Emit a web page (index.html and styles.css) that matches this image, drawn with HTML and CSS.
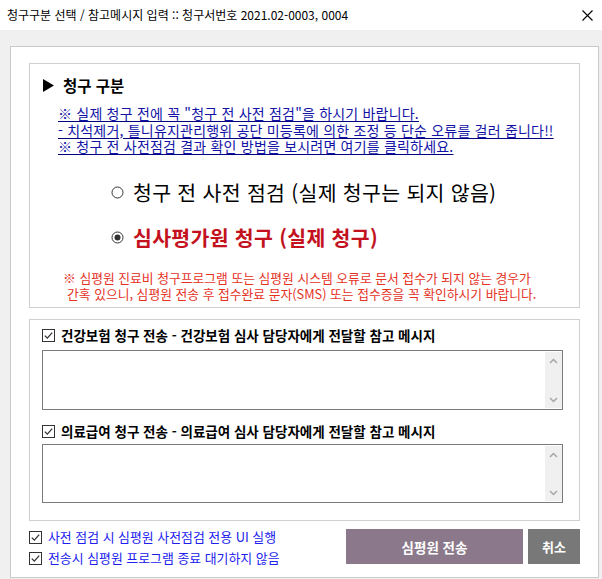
FILE: index.html
```html
<!DOCTYPE html>
<html lang="ko">
<head>
    <meta charset="UTF-8">
    <meta name="viewport" content="width=device-width, initial-scale=1.0">
    <title>청구구분 선택 / 참고메시지 입력</title>
    <link rel="stylesheet" href="styles.css">
</head>
<body>

    <!-- Window title bar -->
    <div class="titlebar">
        <span class="title">청구구분 선택 / 참고메시지 입력 :: 청구서번호 2021.02-0003, 0004</span>
        <svg class="close-btn" width="11" height="11" viewBox="0 0 11 11">
            <path d="M0.5 0.5 L10.5 10.5 M10.5 0.5 L0.5 10.5" stroke="#000" stroke-width="1.1" fill="none"/>
        </svg>
    </div>

    <div class="dialog">

        <!-- 청구 구분 -->
        <div class="panel claim-panel">
            <h2 class="panel-title">
                <svg width="11" height="13" viewBox="0 0 11 13"><polygon points="0,0 11,6.5 0,13" fill="#000"/></svg>
                청구 구분
            </h2>

            <div class="notice-links">
                <a href="#">※ 실제 청구 전에 꼭 "청구 전 사전 점검"을 하시기 바랍니다.</a>
                <a href="#">- 치석제거, 틀니유지관리행위 공단 미등록에 의한 조정 등 단순 오류를 걸러 줍니다!!</a>
                <a href="#">※ 청구 전 사전점검 결과 확인 방법을 보시려면 여기를 클릭하세요.</a>
            </div>

            <div class="radio-row">
                <svg width="13" height="13" viewBox="0 0 13 13"><circle cx="6.5" cy="6.5" r="5.5" fill="#fff" stroke="#333" stroke-width="1"/></svg>
                <span>청구 전 사전 점검 (실제 청구는 되지 않음)</span>
            </div>
            <div class="radio-row checked">
                <svg width="13" height="13" viewBox="0 0 13 13"><circle cx="6.5" cy="6.5" r="5.5" fill="#fff" stroke="#333" stroke-width="1"/><circle cx="6.5" cy="6.5" r="3" fill="#333"/></svg>
                <span>심사평가원 청구 (실제 청구)</span>
            </div>

            <p class="warning">
                <span>※ 심평원 진료비 청구프로그램 또는 심평원 시스템 오류로 문서 접수가 되지 않는 경우가</span>
                <span class="second">간혹 있으니, 심평원 전송 후 접수완료 문자(SMS) 또는 접수증을 꼭 확인하시기 바랍니다.</span>
            </p>
        </div>

        <!-- 참고 메시지 -->
        <div class="panel message-panel">
            <div class="check-label">
                <svg width="13" height="13" viewBox="0 0 13 13"><rect x="0.5" y="0.5" width="12" height="12" fill="#fff" stroke="#333"/><path d="M2.8 6.6 L5.3 9.1 L10.2 3.6" stroke="#333" stroke-width="1.3" fill="none"/></svg>
                건강보험 청구 전송 - 건강보험 심사 담당자에게 전달할 참고 메시지
            </div>
            <div class="memo">
                <div class="scrollbar">
                    <span class="arrow"><svg width="9" height="6" viewBox="0 0 9 6"><path d="M1 5 L4.5 1.5 L8 5" stroke="#a6a6a6" stroke-width="1.5" fill="none"/></svg></span>
                    <span class="arrow"><svg width="9" height="6" viewBox="0 0 9 6"><path d="M1 1 L4.5 4.5 L8 1" stroke="#a6a6a6" stroke-width="1.5" fill="none"/></svg></span>
                </div>
            </div>

            <div class="check-label second">
                <svg width="13" height="13" viewBox="0 0 13 13"><rect x="0.5" y="0.5" width="12" height="12" fill="#fff" stroke="#333"/><path d="M2.8 6.6 L5.3 9.1 L10.2 3.6" stroke="#333" stroke-width="1.3" fill="none"/></svg>
                의료급여 청구 전송 - 의료급여 심사 담당자에게 전달할 참고 메시지
            </div>
            <div class="memo short">
                <div class="scrollbar">
                    <span class="arrow"><svg width="9" height="6" viewBox="0 0 9 6"><path d="M1 5 L4.5 1.5 L8 5" stroke="#a6a6a6" stroke-width="1.5" fill="none"/></svg></span>
                    <span class="arrow"><svg width="9" height="6" viewBox="0 0 9 6"><path d="M1 1 L4.5 4.5 L8 1" stroke="#a6a6a6" stroke-width="1.5" fill="none"/></svg></span>
                </div>
            </div>
        </div>

        <!-- Options and buttons -->
        <div class="footer-row">
            <div class="options">
                <div class="option">
                    <svg width="13" height="13" viewBox="0 0 13 13"><rect x="0.5" y="0.5" width="12" height="12" fill="#fff" stroke="#333"/><path d="M2.8 6.6 L5.3 9.1 L10.2 3.6" stroke="#333" stroke-width="1.3" fill="none"/></svg>
                    사전 점검 시 심평원 사전점검 전용 UI 실행
                </div>
                <div class="option">
                    <svg width="13" height="13" viewBox="0 0 13 13"><rect x="0.5" y="0.5" width="12" height="12" fill="#fff" stroke="#333"/><path d="M2.8 6.6 L5.3 9.1 L10.2 3.6" stroke="#333" stroke-width="1.3" fill="none"/></svg>
                    전송시 심평원 프로그램 종료 대기하지 않음
                </div>
            </div>
            <div class="actions">
                <button class="send-btn">심평원 전송</button>
                <button class="cancel-btn">취소</button>
            </div>
        </div>
    </div>

</body>
</html>
```

FILE: styles.css
```css
body {
    font-family: "Noto Sans CJK KR", "Noto Sans", sans-serif;
    background-color: #f0f0f0;
    margin: 0;
    padding: 0;
    color: #000;
}
/* Title bar */
.titlebar {
    height: 30px;
    background-color: #fff;
    display: flex;
    align-items: center;
    padding-left: 7px;
}
.title {
    font-size: 12px;
    line-height: 16px;
}
.close-btn {
    margin-left: auto;
    margin-right: 9px;
}
/* Dialog body */
.dialog {
    margin: 16px 3px 0 10px;
    border: 1px solid #cacaca;
    background-color: #fff;
    padding: 16px 18px 9px 18px;
}
.panel {
    border: 1px solid #cfcfcf;
}
.claim-panel {
    padding: 0 0 5px 13px;
}
.panel-title {
    margin: 11px 0 0 0;
    font-size: 15.5px;
    line-height: 20px;
    font-weight: bold;
    display: flex;
    align-items: center;
    gap: 9px;
}
.notice-links {
    margin: 10px 0 0 15px;
}
.notice-links a {
    display: block;
    width: fit-content;
    font-size: 14px;
    line-height: 16.5px;
    letter-spacing: 0.2px;
    color: #1212a6;
    text-decoration: underline;
    text-decoration-color: #000080;
    text-underline-offset: 2px;
}
.radio-row {
    margin: 24.5px 0 0 68px;
    height: 26px;
    display: flex;
    align-items: center;
    gap: 9px;
    font-size: 20.5px;
    line-height: 26px;
    letter-spacing: 0.3px;
}
.radio-row.checked {
    margin-top: 19px;
    font-weight: bold;
    color: #c3121e;
}
.warning {
    margin: 20px 0 0 20px;
    font-size: 12.8px;
    line-height: 16px;
    color: #e5321f;
}
.warning span {
    display: block;
}
.warning .second {
    padding-left: 4px;
}
/* Message panel */
.message-panel {
    margin-top: 11px;
    padding: 5px 16px 17px 12px;
}
.check-label {
    display: flex;
    align-items: center;
    gap: 6px;
    font-size: 13.5px;
    line-height: 20px;
    font-weight: bold;
}
.check-label.second {
    margin-top: 11px;
}
.memo {
    margin-top: 5px;
    height: 60px;
    box-sizing: border-box;
    border: 1px solid #7a7a7a;
    padding: 1px 0;
    display: flex;
    justify-content: flex-end;
}
.memo.short {
    margin-top: 3px;
    height: 59px;
}
.scrollbar {
    width: 17px;
    background-color: #f0f0f0;
    display: flex;
    flex-direction: column;
    justify-content: space-between;
}
.arrow {
    height: 17px;
    display: flex;
    align-items: center;
    justify-content: center;
}
/* Bottom options and buttons */
.footer-row {
    margin-top: 8px;
    display: flex;
    align-items: flex-start;
}
.options {
    margin-top: -2px;
    display: flex;
    flex-direction: column;
    gap: 1px;
}
.option {
    display: flex;
    align-items: center;
    gap: 6px;
    font-size: 12.9px;
    line-height: 20px;
    color: #2020ee;
}
.actions {
    margin-left: auto;
    display: flex;
    gap: 5px;
}
.actions button {
    height: 35px;
    border: none;
    color: #fff;
    font-family: inherit;
    font-weight: bold;
    cursor: pointer;
}
.send-btn {
    width: 177px;
    background-color: #8b798b;
    font-size: 13.5px;
}
.cancel-btn {
    width: 52px;
    background-color: #787878;
    font-size: 13px;
}
```
